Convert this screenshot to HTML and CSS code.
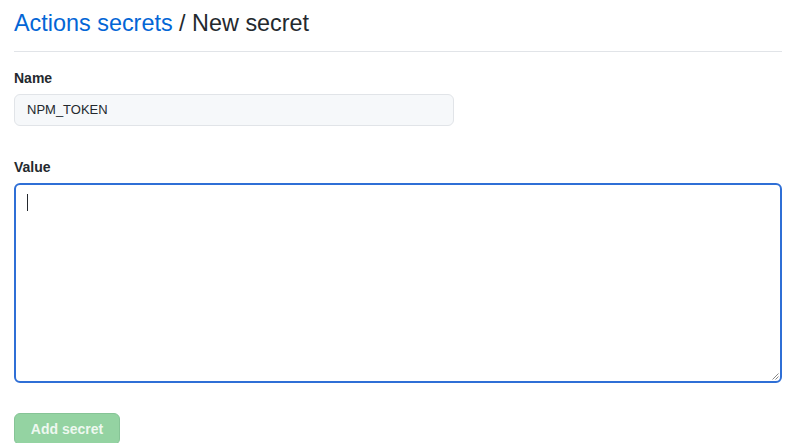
FILE: index.html
```html
<!DOCTYPE html>
<html>
<head>
<meta charset="utf-8">
<link rel="stylesheet" href="styles.css">
</head>
<body>
<div class="page">
  <div class="subhead">
    <h2 class="subhead-heading"><a class="crumb" href="#">Actions secrets</a> / New secret</h2>
  </div>
  <form class="secret-form">
    <div class="field">
      <label class="field-label">Name</label>
      <div class="input-name">NPM_TOKEN</div>
    </div>
    <div class="field field-value">
      <label class="field-label">Value</label>
      <div class="textarea">
        <span class="caret"></span>
        <svg class="grip" width="8" height="8" viewBox="0 0 8 8"><path d="M7.5 1.5 L1.5 7.5 M7.5 4.5 L4.5 7.5" stroke="#888" stroke-width="1" fill="none"/></svg>
      </div>
    </div>
    <div class="actions">
      <button type="button" class="btn-primary">Add secret</button>
    </div>
  </form>
</div>
</body>
</html>
```
FILE: styles.css
```css
html, body {
  margin: 0;
  padding: 0;
  background: #ffffff;
}
body {
  font-family: "Liberation Sans", Arial, sans-serif;
  color: #24292e;
  font-size: 14px;
  line-height: 1.5;
}
.page {
  width: 768px;
  padding: 8px 0 0 14px;
}
.subhead {
  border-bottom: 1px solid #e1e4e8;
  padding-bottom: 13px;
}
.subhead-heading {
  margin: 0;
  font-size: 23.4px;
  font-weight: 400;
  line-height: 30px;
  color: #24292e;
}
.crumb {
  color: #0366d6;
  text-decoration: none;
}
.secret-form {
  display: flex;
  flex-direction: column;
  padding-top: 16px;
}
.field {
  display: flex;
  flex-direction: column;
  gap: 6px;
}
.field-value {
  margin-top: 31px;
}
.field-label {
  font-weight: 700;
  font-size: 14px;
  line-height: 20px;
}
.input-name {
  box-sizing: border-box;
  width: 440px;
  height: 32px;
  padding: 0 12px;
  font-size: 13px;
  line-height: 30px;
  background: #f6f8fa;
  border: 1px solid #e1e4e8;
  border-radius: 6px;
  color: #24292e;
}
.textarea {
  position: relative;
  box-sizing: border-box;
  width: 768px;
  height: 200px;
  border: 2px solid #2f6fd6;
  border-radius: 6px;
  padding: 9px 11px;
}
.caret {
  display: block;
  width: 1px;
  height: 17px;
  background: #24292e;
}
.grip {
  position: absolute;
  right: 1px;
  bottom: 1px;
}
.actions {
  margin-top: 30px;
}
.btn-primary {
  box-sizing: border-box;
  height: 32px;
  width: 106px;
  padding: 0;
  font-family: "Liberation Sans", Arial, sans-serif;
  font-size: 14px;
  font-weight: 700;
  line-height: 20px;
  color: rgba(255, 255, 255, 0.85);
  background: #94d3a2;
  border: 1px solid #86c496;
  border-radius: 6px;
}
```
